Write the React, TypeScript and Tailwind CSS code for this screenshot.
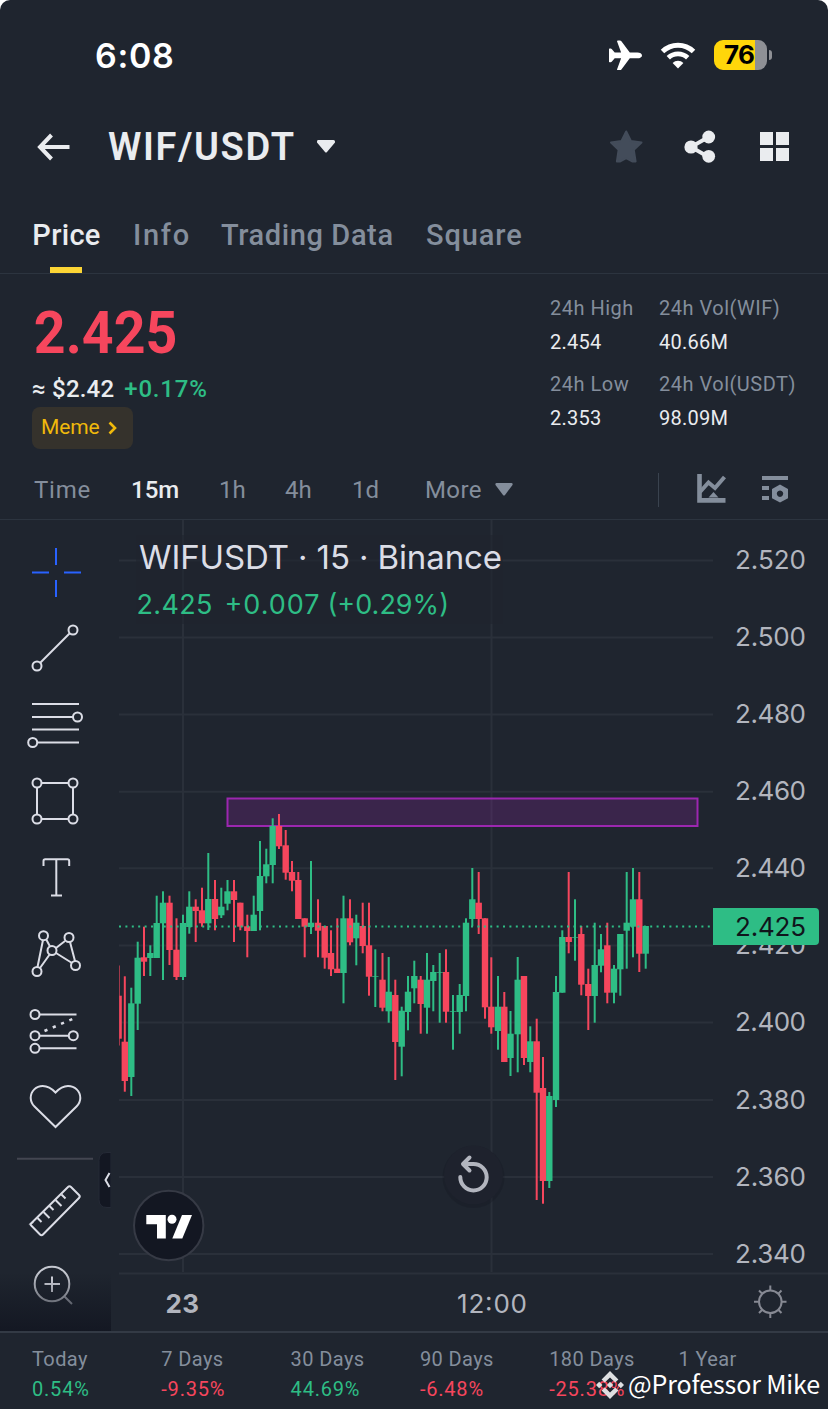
import React from "react";

type Candle = [x: number, high: number, top: number, bottom: number, low: number, up: 0 | 1];

const candles: Candle[] = [
  [124.8, 976.3, 1041.7, 1081, 1091.7, 0], [131.3, 987.7, 1003.3, 1077, 1096, 1],
  [137.7, 941.7, 957.7, 1003.7, 1030, 1], [144, 926.7, 957.3, 961.7, 976, 0],
  [150.3, 945.3, 953, 958, 976, 1], [156.7, 895.7, 923, 958, 958, 1],
  [163, 891.3, 902.7, 923.3, 980, 1], [169.5, 895.7, 902.7, 950, 965, 0],
  [176.5, 918.3, 949.7, 977, 980, 0], [183, 914.7, 923, 977, 980, 1],
  [189.3, 891.3, 906.7, 927, 933.7, 1], [195.7, 899.3, 906.7, 911, 942, 0],
  [202, 887.7, 910.3, 923.3, 926.7, 0], [208.3, 853, 899, 923.3, 930, 1],
  [215, 880, 899, 919, 930.3, 0], [221.3, 887.7, 906.7, 915.3, 918, 1],
  [227.5, 880, 891.3, 903.7, 910.3, 1], [234, 880, 891.3, 900, 942, 0],
  [240.3, 902.7, 902.7, 926.7, 930.3, 0], [247.3, 914.7, 926.3, 931, 957.3, 0],
  [253.7, 895.7, 914.7, 931, 931, 1], [260, 841, 876, 911, 930.3, 1],
  [266.3, 848.7, 864.3, 876.3, 883.3, 1], [272.7, 818.3, 826, 865, 883.3, 1],
  [279, 814, 826, 846.3, 849, 0], [285.7, 830, 845.3, 872.7, 879.7, 0],
  [292, 861, 872, 880.7, 891.3, 0], [298.3, 872, 880, 919, 919, 0],
  [304.7, 918.3, 918.3, 926.7, 957.3, 0], [311, 861, 922.7, 927, 934, 1],
  [318, 899.3, 922.7, 930.7, 957.3, 0], [324.7, 926, 926, 957.7, 968.7, 0],
  [331, 930.3, 953, 969.3, 976, 0], [337.3, 918.3, 968.7, 973, 973, 0],
  [343.5, 895.7, 918.3, 973, 1003.3, 1], [350, 899.3, 918.3, 942.3, 945.3, 0],
  [356.3, 914.7, 922.7, 938.3, 965.3, 1], [362.7, 902.7, 926, 946, 953.3, 0],
  [369, 902.7, 945.3, 976.7, 995.7, 0], [375.3, 949.3, 976, 976.7, 1007, 1],
  [382.5, 953, 979.7, 1007.7, 1011.3, 0], [388.7, 957, 991.7, 1011.3, 1022.7, 1],
  [395.3, 979.7, 995, 1042, 1080, 0], [401.7, 1006.7, 1010.7, 1046.7, 1076.3, 1],
  [408, 976, 991.7, 1012, 1030.3, 1], [414.3, 960.7, 976, 988.3, 1003.3, 1],
  [420.7, 976, 979.7, 1004, 1033.7, 0], [427, 953, 979.7, 1007.7, 1033.7, 1],
  [433.3, 965, 972, 981, 1011.3, 1], [439.7, 953, 972, 972.7, 1022.7, 1],
  [446, 949.3, 972, 1011.7, 1022.7, 0], [453, 995, 1011, 1011.7, 1049.7, 1],
  [459.7, 984, 995, 1012, 1033.7, 1], [466, 918.3, 922.7, 996, 1011.3, 1],
  [472.3, 868, 899.3, 919, 926.3, 1], [478.7, 872, 902.7, 919, 934, 0],
  [485, 918.3, 918.3, 1007.3, 1018.7, 0], [491.3, 957.3, 1006.7, 1027.3, 1033.7, 0],
  [498, 976, 1006.7, 1031, 1049.7, 1], [504.3, 992, 1006.7, 1062, 1062, 0],
  [510.5, 1011, 1033.7, 1058, 1076, 1], [517.7, 957, 979.7, 1034.3, 1072.3, 1],
  [524, 976, 976, 1058, 1065, 0], [530.3, 1026.3, 1041.3, 1062, 1072.3, 1],
  [536.7, 1018.7, 1041.3, 1092.7, 1200, 0], [543, 1057, 1088, 1181, 1203.7, 0],
  [549.3, 1092, 1096, 1181, 1188, 1], [556, 976, 992, 1100, 1107, 1],
  [562.3, 930.3, 937, 992.7, 992.7, 1], [568.7, 872, 937, 942, 953.3, 0],
  [575, 899.3, 937, 937.7, 960.7, 1], [581.3, 926, 934, 984.7, 995.3, 0],
  [588.3, 968.7, 984, 996, 1030, 0], [594.7, 922.7, 965, 996, 1022.7, 1],
  [601, 934, 949.3, 965.7, 972.3, 1], [607.3, 922.7, 945.3, 992.7, 1003.3, 0],
  [614, 965, 968.7, 992.7, 1003.3, 1], [620.3, 934, 934, 969.3, 995.7, 1],
  [626.7, 872, 922.7, 930.7, 968.7, 1], [633, 868, 899.3, 926.7, 957.3, 1],
  [639.3, 872, 899.3, 953.7, 972, 0], [645.7, 926, 926, 953.7, 968.7, 1],
];

const GREEN = "#2ebd85";
const RED = "#f6465d";

const levels: [number, string][] = [
  [560.5, "2.520"], [637.5, "2.500"], [714.5, "2.480"], [791.7, "2.460"], [868.3, "2.440"],
  [945.5, "2.420"], [1022.5, "2.400"], [1100, "2.380"], [1177, "2.360"], [1254, "2.340"],
];

function StatusBar() {
  return (
    <div className="flex h-[110px] items-center pr-[56px] pl-[95px] text-white">
      <span className="font-[Inter] text-[34px] font-semibold tracking-[0.7px]">6:08</span>
      <svg className="ml-auto" width="34" height="30" viewBox="608 40 34 30" fill="currentColor">
        <path d="M642 55.4c0 1.7-2 2.900-4.600 2.900h-7.600l-8.400 11.200c-.4.5-.9.8-1.500.8h-2c-.7 0-1-.4-.8-1l4-11h-6.400l-3 3.400c-.3.3-.6.5-1.100.5h-1c-.4 0-.7-.3-.6-.8V49.400c-.1-.5.2-.8.6-.8h1c.5 0 .8.2 1.100.5l3 3.400h6.400l-4-11c-.2-.6.1-1 .8-1h2c.6 0 1.100.3 1.500.8l8.400 11.200h7.600c2.600 0 4.600 1.200 4.600 2.900z" />
      </svg>
      <svg className="ml-[18px]" width="36" height="28" viewBox="660 40 36 28" fill="none" stroke="currentColor">
        <path d="M662.500 50.500a22.300 22.300 0 0 1 31 0" strokeWidth="5" />
        <path d="M668.300 56.800a14 14 0 0 1 19.400 0" strokeWidth="4.800" />
        <path d="M672.600 62a7.800 7.800 0 0 1 10.800 0l-5.400 5.600z" fill="currentColor" stroke="none" />
      </svg>
      <div className="ml-[18px] flex h-[30px] w-[53px] items-center justify-center rounded-[9px] bg-[linear-gradient(90deg,#ffd60a_78%,#8e9095_78%)] pr-[3px] font-[Inter] text-[26px] leading-none font-bold tracking-[-0.700px] text-black">
        76
      </div>
      <div className="ml-[2px] h-[10px] w-[3px] rounded-r-full bg-[#8e9095]" />
    </div>
  );
}

function Header() {
  return (
    <div className="flex h-[74px] items-center pr-[38px] pb-[1px] pl-[36px] text-[#eaecef]">
      <svg width="34" height="28" viewBox="36 133 34 28" fill="none" stroke="currentColor" strokeWidth="4">
        <path d="M69.500 147H40.500M51.500 135l-11.500 12 11.500 12" />
      </svg>
      <span className="ml-[38px] pt-[2px] font-[Roboto] text-[38px] font-semibold tracking-[1.600px]">WIF/USDT</span>
      <svg className="ml-[20px]" width="20" height="16" viewBox="0 0 20 16" fill="currentColor">
        <path d="M2 1h15.500q1.500 0 1.500 1.500v1L11 13q-1 1.200-2 0L1 3.500v-1Q1 1 2 1z" />
      </svg>
      <svg className="ml-auto" width="34" height="34" viewBox="609 130 34 34" fill="#434c5a" stroke="#434c5a" strokeWidth="2" strokeLinejoin="round">
        <path d="M626.200 131.500l4.700 9.500 10.600 1.500-7.700 7.400 1.800 11.600h-3.400l-6-3.400-6 3.400h-3.300l1.700-11.600-7.600-7.400 10.500-1.500z" />
      </svg>
      <svg className="ml-[41px]" width="32" height="34" viewBox="684 130 32 34" fill="currentColor">
        <path d="M708.500 137L691 147l17.500 10" fill="none" stroke="currentColor" strokeWidth="3.800" />
        <circle cx="691" cy="147" r="6.600" /><circle cx="708.700" cy="137" r="6.400" /><circle cx="708.700" cy="156.300" r="6.400" />
      </svg>
      <div className="mr-[1px] ml-[44px] grid grid-cols-2 gap-[3px]">
        <i className="h-[13px] w-[13px] bg-current" /><i className="h-[13px] w-[13px] bg-current" />
        <i className="h-[13px] w-[13px] bg-current" /><i className="h-[13px] w-[13px] bg-current" />
      </div>
    </div>
  );
}

function Tabs() {
  return (
    <div className="flex h-[90px] gap-[33px] border-b border-[#2c343f] pt-[29px] pl-[33px] font-[Roboto] text-[29px] leading-[44px] font-medium text-[#848e9c]">
      <div className="flex w-[67px] flex-col items-center text-[#eaecef]">
        <span className="tracking-[0.300px]">Price</span>
        <div className="mt-[10px] mr-[2px] h-[6px] w-[32px] shrink-0 bg-[#fcd535]" />
      </div>
      <span className="w-[55px] tracking-[1.700px]">Info</span>
      <span className="w-[172px] tracking-[0.600px] whitespace-nowrap">Trading Data</span>
      <span className="tracking-[0.900px]">Square</span>
    </div>
  );
}

function Stat({ label, value }: { label: string; value: string }) {
  return (
    <div className="flex flex-col whitespace-nowrap">
      <span className="text-[20px] leading-[34px] tracking-[0.500px] text-[#848e9c]">{label}</span>
      <span className="text-[20px] leading-[34px] tracking-[0.250px] text-[#eaecef]">{value}</span>
    </div>
  );
}

function Summary() {
  return (
    <div className="flex h-[184px] pl-[32px] font-[Roboto]">
      <div className="flex w-[518px] flex-col items-start pt-[24px]">
        <span className="h-[70px] origin-left scale-x-[0.925] pl-[2px] text-[60px] leading-[70px] font-bold text-[#f6465d]">2.425</span>
        <div className="flex h-[39px] items-center gap-[10px] pt-[2px] text-[24px] font-medium">
          <span className="tracking-[0.200px] text-[#eaecef]">≈ $2.42</span>
          <span className="tracking-[0.800px] text-[#2ebd85]">+0.17%</span>
        </div>
        <div className="flex h-[42px] w-[101px] items-center gap-[8px] rounded-[8px] bg-[#35322c] pl-[9px] text-[21px] tracking-[-0.100px] text-[#f0b90b]">
          <span>Meme</span>
          <svg width="9" height="14" viewBox="0 0 9 14" fill="none" stroke="currentColor" strokeWidth="2.600"><path d="M1.500 1.500L7 7l-5.500 5.500" /></svg>
        </div>
      </div>
      <div className="grid h-[153px] grid-cols-[109px_1fr] gap-y-[8px] pt-[17px]">
        <Stat label="24h High" value="2.454" />
        <Stat label="24h Vol(WIF)" value="40.66M" />
        <Stat label="24h Low" value="2.353" />
        <Stat label="24h Vol(USDT)" value="98.09M" />
      </div>
    </div>
  );
}

function Intervals() {
  return (
    <div className="flex h-[62px] items-center border-b border-[#2c343f] pt-[2px] pl-[34px] font-[Roboto] text-[24px] text-[#848e9c]">
      <span className="w-[97px] tracking-[0.800px]">Time</span>
      <span className="w-[88px] font-medium text-[#eaecef]">15m</span>
      <span className="w-[66px]">1h</span>
      <span className="w-[67px]">4h</span>
      <span className="w-[73px]">1d</span>
      <span className="w-[70px] tracking-[0.400px]">More</span>
      <svg width="18" height="14" viewBox="0 0 18 14" fill="currentColor"><path d="M1.500 0h15q1.500 0 1 2L10 12q-1 1.200-2 0L.5 2Q0 0 1.500 0z" /></svg>
      <div className="ml-[145px] h-[34px] w-px bg-[#3a434f]" />
      <svg className="mb-[2px] ml-[38px]" width="30" height="30" viewBox="697 474 30 30" fill="none" stroke="currentColor" strokeWidth="4.600">
        <path d="M699.500 474v26.400H725.500" /><path d="M700 492l8.500-9.500 6.500 5.500 9.500-11" strokeWidth="4" /><path d="M708.500 497.500l5-5.500 5 5.500z" fill="currentColor" stroke="none" />
      </svg>
      <svg className="mb-[2px] ml-[35px]" width="28" height="28" viewBox="762 475 28 28" fill="currentColor">
        <path d="M762 476h26v4h-26zM762 486h7v4h-7zM762 496h7v4h-7z" />
        <path d="M780 484.500l8 4.600v9.200L780 502.500l-8-4.200v-9.200zm0 6a3.200 3.200 0 1 0 .01 0z" fillRule="evenodd" />
      </svg>
    </div>
  );
}

function Toolbar() {
  return (
    <svg className="shrink-0" width="111" height="811" viewBox="0 520 111 811" fill="none" stroke="#dbdde6" strokeWidth="2">
      <defs>
        <linearGradient id="fade" x1="0" y1="0" x2="0" y2="1">
          <stop offset="0" stopColor="#131722" stopOpacity="0" /><stop offset="1" stopColor="#131722" stopOpacity="0.950" />
        </linearGradient>
      </defs>
      <path d="M56 548v17M56 580v17M32 572.500h17M64 572.500h17" stroke="#2962ff" />
      <path d="M40.500 662.500L70 633" /><circle cx="37" cy="666" r="4.500" /><circle cx="73" cy="630" r="4.500" />
      <path d="M32 704h47M32 717h41M32 729.500h47M38 742.500h41" /><circle cx="77.500" cy="717" r="4.500" /><circle cx="32.700" cy="742.500" r="4.500" />
      <path d="M42 783h27M42 819h27M37 787.500v27M73 787.500v27" />
      <circle cx="37" cy="783" r="4.500" /><circle cx="73" cy="783" r="4.500" /><circle cx="37" cy="819" r="4.500" /><circle cx="73" cy="819" r="4.500" />
      <path d="M43.500 866v-5q0-1.700 1.700-1.700h22.300q1.700 0 1.700 1.700v5M56.300 859.500v36M51 895.500h11" />
      <path d="M43 940l-5.500 27M40 968l10-14M46 939l4 7.500M56 948l9-7M70 942l5 19M56 953l16 10" />
      <circle cx="43.500" cy="935.700" r="4.500" /><circle cx="69" cy="937.500" r="4.500" /><circle cx="52" cy="950.500" r="4.500" /><circle cx="37" cy="971.500" r="4.500" /><circle cx="75.500" cy="965.500" r="4.500" />
      <path d="M39.500 1014.500h37M39.500 1035.700h29M39.500 1048.300h37" />
      <circle cx="35" cy="1014.500" r="4.500" /><circle cx="35" cy="1035.700" r="4.500" /><circle cx="73.300" cy="1035.700" r="4.500" /><circle cx="35" cy="1048.300" r="4.500" />
      <path d="M44.500 1031l28-12" strokeWidth="2.600" strokeDasharray="3.200 5.800" />
      <path d="M55.500 1127L34.500 1106.500a12.500 12.500 0 0 1-3.800-8.500c0-7 5.500-12 12-12 5.500 0 9.500 3 12.800 6.500 3.300-3.500 7-6.500 12.500-6.500 6.800 0 12.300 5 12.300 12 0 3.500-1.300 6-3.800 8.500z" />
      <path d="M17 1158.700h76" stroke="#434651" />
      <path d="M31 1223.500L68 1187q1.500-1.500 3 0l8 8q1.500 1.500 0 3L43 1234.500q-1.500 1.500-3 0l-8.800-9q-1.200-1 0-2z" />
      <path d="M37.500 1218l4 4M43.500 1212l6 6M49.500 1206l4 4M55.500 1200l6 6M61.500 1194.500l4 4" />
      <circle cx="52" cy="1284" r="17.300" stroke="#c5c8d0" /><path d="M44.500 1284h15.500M52 1276.500v15.500" stroke="#dbdde6" /><path d="M64.500 1296.500l7.500 7.500" stroke="#b2b5be" />
      <path d="M0 1272h111v59H0z" fill="url(#fade)" stroke="none" />
      <path d="M111 1152.500h-4q-8 0-8 8v39q0 8 8 8h4z" fill="#131722" stroke="#252a36" strokeWidth="1" />
      <path d="M109.500 1173l-4 7 4 7" strokeWidth="2" />
    </svg>
  );
}

function Chart() {
  return (
    <svg className="shrink-0 font-[Inter]" width="717" height="811" viewBox="111 520 717 811" fill="none">
      <g stroke="#2a303a" strokeWidth="2">
        {levels.map(([y]) => <path key={y} d={`M119 ${y}H713`} />)}
        <path d="M183 520V1272M491.500 520V1272M119 1273.500H828" />
      </g>
      <path d="M136 535H503V624H136z" fill="#1f252f" fillOpacity="0.600" />
      <path d="M227.500 798.500H697.500V826H227.500z" fill="#9c27b0" fillOpacity="0.220" stroke="#9c27b0" strokeWidth="2" />
      <path d="M119.500 965.500v80" stroke={RED} strokeOpacity="0.600" strokeWidth="1" />
      <path d="M119.300 995.700h2.500v43h-2.500z" fill={RED} />
      {candles.map(([x, high, top, bottom, low, up]) => (
        <g key={x} fill={up ? GREEN : RED}>
          <rect x={x - 1} y={high} width="2" height={low - high} />
          <rect x={x - 3.2} y={top} width="6.400" height={bottom - top} />
        </g>
      ))}
      <path d="M119 926.500H713" stroke={GREEN} strokeWidth="2" strokeDasharray="2 4.400" />
      <text x="139" y="569" fontSize="33" fill="#dbdde6" textLength="363">WIFUSDT · 15 · Binance</text>
      <text x="136.500" y="614" fontSize="27" fill={GREEN} textLength="76">2.425</text>
      <text x="224.500" y="614" fontSize="27" fill={GREEN} textLength="95">+0.007</text>
      <text x="327.500" y="614" fontSize="27" fill={GREEN} textLength="121.500">(+0.29%)</text>
      <g fontSize="26" fill="#b2b5be">
        {levels.map(([y, label]) => <text key={y} x="735" y={y + 8.7} textLength="71">{label}</text>)}
        <text x="165.500" y="1312.500" fontWeight="700" textLength="33.500">23</text>
        <text x="457" y="1312.500" textLength="70">12:00</text>
      </g>
      <path d="M713 908h102q4 0 4 4v29q0 4-4 4H713z" fill={GREEN} />
      <text x="735" y="936" fontSize="26" fill="#10151c" textLength="71">2.425</text>
      <g stroke="#868993" strokeWidth="2">
        <circle cx="770.300" cy="1301.700" r="11.300" />
        <path d="M770.300 1290v-4.500M770.300 1313v5M758.500 1301.700h-4.500M782 1301.700h4.500M762 1293.500l-3-3M778.500 1293.500l3-3M762 1310l-3 3M778.500 1310l3 3" />
      </g>
      <circle cx="473.500" cy="1177" r="31" fill="#131722" fillOpacity="0.300" />
      <circle cx="473.500" cy="1175" r="29.500" fill="#1e222d" />
      <path d="M460.300 1177a13.200 13.200 0 1 0 13.200-13H464M469.500 1157.500l-6.500 6.500 6.500 6.500" stroke="#b2b5be" strokeWidth="4" strokeLinecap="round" strokeLinejoin="round" />
      <circle cx="168.700" cy="1225.500" r="34.700" fill="#131722" stroke="#363a45" strokeWidth="2" />
      <g fill="#fff">
        <path d="M146.300 1215h19.500v23.500h-8.800v-14.300h-10.700z" /><circle cx="172" cy="1219.300" r="4.500" /><path d="M182 1215h10l-9.700 23.500h-10z" />
      </g>
    </svg>
  );
}

const periods = [
  ["Today", "0.54%"], ["7 Days", "-9.35%"], ["30 Days", "44.69%"],
  ["90 Days", "-6.48%"], ["180 Days", "-25.38%"], ["1 Year", "-"],
];

function valueClass(value: string) {
  if (value === "-") return "pl-[4px] text-[#848e9c]";
  return value.startsWith("-") ? "text-[#f6465d]" : "text-[#2ebd85]";
}

function Performance() {
  return (
    <div className="relative grid h-[78px] grid-cols-[repeat(6,129.300px)] overflow-hidden border-t-2 border-[#333a45] pt-[11px] pl-[32px] font-[Roboto]">
      {periods.map(([label, value]) => (
        <div key={label} className="flex flex-col text-[20px] leading-[30px] whitespace-nowrap">
          <span className="tracking-[0.400px] text-[#848e9c]">{label}</span>
          <span className={`tracking-[0.800px] ${valueClass(value)}`}>{value}</span>
        </div>
      ))}
      <div className="absolute right-[8px] bottom-0 flex h-[48px] items-center gap-[4px] text-white">
        <svg width="28" height="28" viewBox="0 0 28 28" fill="#dedfe1">
          <path d="M14 0l8.400 8.400-3.200 3.200L14 6.400l-5.200 5.200-3.200-3.200zM14 28l-8.400-8.400 3.200-3.200 5.200 5.200 5.200-5.200 3.200 3.200zM3.200 10.800L6.400 14l-3.200 3.200L0 14zM24.800 10.800L28 14l-3.200 3.200-3.200-3.200zM14 10.800l3.200 3.200-3.200 3.200-3.200-3.200z" />
        </svg>
        <span className="pb-[3px] font-['Noto_Sans_CJK_SC',sans-serif] text-[25px] leading-none tracking-[-0.130px]">@Professor Mike</span>
      </div>
    </div>
  );
}

export default function App() {
  return (
    <div className="bg-white">
      <div className="flex h-[1409px] w-[828px] flex-col overflow-hidden rounded-t-[10px] bg-[#1f252f]">
        <StatusBar />
        <Header />
        <Tabs />
        <Summary />
        <Intervals />
        <div className="flex h-[811px]">
          <Toolbar />
          <Chart />
        </div>
        <Performance />
      </div>
    </div>
  );
}
